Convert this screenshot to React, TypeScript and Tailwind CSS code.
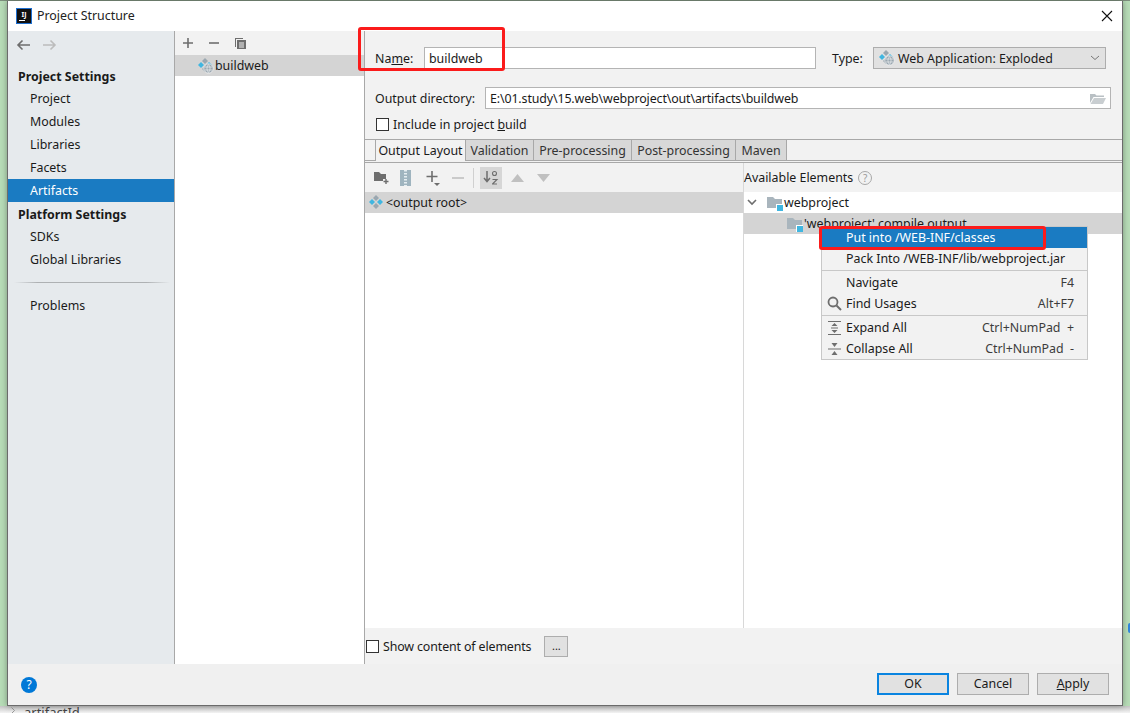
import { ReactNode } from "react";

const navItems = ["Project", "Modules", "Libraries", "Facets", "Artifacts"];
const tabs = [
  { label: "Validation", width: "w-[68px]" },
  { label: "Pre-processing", width: "w-[98px]" },
  { label: "Post-processing", width: "w-[104px]" },
  { label: "Maven", width: "w-[51px]" },
];

function ArtifactIcon({ globe = false }: { globe?: boolean }) {
  return (
    <svg width="17" height="16" viewBox="0 0 17 16" className="shrink-0">
      <path d="M1 7l3-3 3 3-3 3z" fill="#40b6e0" />
      <path d="M5 3l3-3 3 3-3 3z" fill="#9aa7b0" />
      <path d="M9 7l3-3 3 3-3 3z" fill="#40b6e0" />
      <path d="M5 11l3-3 3 3-3 3z" fill="#9aa7b0" />
      {globe && (
        <g>
          <circle cx="11.5" cy="10.5" r="4.7" fill="#9aa7b0" stroke="#f2f2f2" strokeWidth="0.8" />
          <path d="M8 9h7M8 12h7M11.5 6.5c-2 2.6-2 5.4 0 8M11.5 6.5c2 2.6 2 5.4 0 8" stroke="#eef1f2" strokeWidth="0.7" fill="none" />
        </g>
      )}
    </svg>
  );
}

function FolderIcon() {
  return (
    <svg width="16" height="16" viewBox="0 0 16 16" className="shrink-0">
      <path d="M0 2h6l2 2h7v9H0z" fill="#a9b5bd" />
      <rect x="9" y="9" width="7" height="7" fill="#fff" />
      <rect x="10" y="10" width="6" height="6" fill="#40b6e0" />
    </svg>
  );
}

function MenuRow({ label, shortcut, active, icon }: { label: string; shortcut?: string; active?: boolean; icon?: ReactNode }) {
  return (
    <div className={`flex h-[21px] items-center pr-[13px] ${active ? "bg-[#1a7bc2] text-white" : ""}`}>
      <div className="flex w-[24px] shrink-0 justify-center">{icon}</div>
      <span className="flex-1 whitespace-nowrap">{label}</span>
      {shortcut && <span className="whitespace-pre text-[#3c3c3c]">{shortcut}</span>}
    </div>
  );
}

function Button({ label, primary }: { label: ReactNode; primary?: boolean }) {
  return (
    <div className={`flex h-[22px] w-[72px] items-center justify-center bg-[#e1e1e1] ${primary ? "border-2 border-[#0a84e0]" : "border border-[#adadad]"}`}>
      {label}
    </div>
  );
}

function CheckBox() {
  return <div className="h-[13px] w-[13px] shrink-0 border border-[#333] bg-white" />;
}

export default function App() {
  return (
    <div className="relative h-[713px] w-[1130px] overflow-hidden bg-[#b7dcb7] text-[12.4px] leading-[16px] text-[#1a1a1a] [font-family:'Noto_Sans',sans-serif]">
      <div className="h-px bg-[#7d8f7d]" />
      <div className="relative z-10 ml-[7px] flex h-[705px] w-[1116px] flex-col border-x border-b border-[#6b6b6b] bg-[#f0f0f0] shadow-[0_0_6px_rgba(0,0,0,0.35)]">
        {/* title bar */}
        <div className="flex h-[30px] shrink-0 items-center bg-white pl-[8px] pr-[9px]">
          <div className="relative flex h-[16px] w-[16px] items-start justify-center border border-[#1e6fd0] bg-[#111] pt-[2px] text-[7px] leading-none font-bold text-white">
            IJ
            <div className="absolute bottom-[2px] left-[2px] h-px w-[6px] bg-white" />
          </div>
          <span className="ml-[5px] flex-1 text-[#222]">Project Structure</span>
          <svg width="12" height="12" viewBox="0 0 12 12">
            <path d="M1 1l10 10M11 1L1 11" stroke="#111" strokeWidth="1.1" fill="none" />
          </svg>
        </div>

        <div className="flex min-h-0 flex-1">
          {/* sidebar */}
          <div className="flex w-[166px] shrink-0 flex-col bg-[#e6eaed]">
            <div className="flex h-[27px] items-center gap-[13px] pl-[8px]">
              <svg width="14" height="12" viewBox="0 0 14 12">
                <path d="M14 6H2M6.5 1.5L2 6l4.5 4.5" stroke="#6e6e6e" strokeWidth="1.6" fill="none" />
              </svg>
              <svg width="14" height="12" viewBox="0 0 14 12">
                <path d="M0 6h12M7.5 1.5L12 6l-4.5 4.5" stroke="#bcbcbc" strokeWidth="1.6" fill="none" />
              </svg>
            </div>
            <div className="flex h-[29px] items-end pb-[2px] pl-[10px] font-bold">Project Settings</div>
            {navItems.map((item) => (
              <div
                key={item}
                className={`flex h-[23px] items-center pl-[22px] ${item === "Artifacts" ? "bg-[#1a7bc2] text-white" : ""}`}
              >
                {item}
              </div>
            ))}
            <div className="flex h-[24px] items-center pl-[10px] pt-[2px] font-bold">Platform Settings</div>
            <div className="flex h-[22px] items-center pl-[22px]">SDKs</div>
            <div className="flex h-[23px] items-center pl-[22px]">Global Libraries</div>
            <div className="ml-[6px] mt-[11px] h-px w-[156px] bg-[linear-gradient(90deg,transparent,#aeb1b3_15%,#aeb1b3_85%,transparent)]" />
            <div className="mt-[11px] flex h-[23px] items-center pl-[22px]">Problems</div>
          </div>

          {/* artifact list */}
          <div className="flex w-[191px] shrink-0 flex-col border-x border-[#a8a8a8] bg-white">
            <div className="flex h-[24px] items-center gap-[14px] bg-[#f2f2f2] pl-[7px]">
              <svg width="12" height="12" viewBox="0 0 12 12">
                <path d="M6 1v10M1 6h10" stroke="#6e6e6e" strokeWidth="1.6" />
              </svg>
              <svg width="12" height="12" viewBox="0 0 12 12">
                <path d="M1 6h10" stroke="#6e6e6e" strokeWidth="1.6" />
              </svg>
              <svg width="13" height="13" viewBox="0 0 13 13">
                <path d="M1 1h8v1H2v8H1z" fill="#6e6e6e" />
                <path d="M3 3h9v9H3z" fill="#6e6e6e" />
                <path d="M5 6h5M5 8h5M5 10h5" stroke="#f2f2f2" />
              </svg>
            </div>
            <div className="flex h-[21px] items-center gap-[1px] bg-[#d4d4d4] pl-[22px]">
              <ArtifactIcon globe />
              <span>buildweb</span>
            </div>
          </div>

          {/* artifact editor */}
          <div className="flex min-w-0 flex-1 flex-col">
            <div className="flex h-[108px] shrink-0 flex-col bg-[#f2f2f2] pl-[10px] pr-[11px]">
              <div className="mt-[16px] flex h-[22px] items-center">
                <span className="w-[49px] pt-px">
                  Na<span className="underline">m</span>e:
                </span>
                <div className="flex h-[22px] w-[392px] items-center border border-[#b4b4b4] bg-white pl-[4px] pt-px">buildweb</div>
                <span className="ml-[16px] w-[41px] pt-px">Type:</span>
                <div className="flex h-[22px] w-[233px] items-center border border-[#adadad] bg-[#e1e1e1] pl-[4px] pr-[5px]">
                  <ArtifactIcon globe />
                  <span className="ml-[3px] flex-1 pt-px">Web Application: Exploded</span>
                  <svg width="10" height="6" viewBox="0 0 10 6">
                    <path d="M1 1l4 3.5L9 1" stroke="#777" fill="none" />
                  </svg>
                </div>
              </div>
              <div className="mt-[18px] flex h-[22px] items-center">
                <span className="w-[110px] pt-px">Output directory:</span>
                <div className="flex h-[22px] flex-1 items-center justify-between border border-[#b4b4b4] bg-white pl-[4px] pr-[4px]">
                  <span className="pt-px tracking-[-0.01em]">E:\01.study\15.web\webproject\out\artifacts\buildweb</span>
                  <svg width="16" height="13" viewBox="0 0 16 13">
                    <path d="M0 2h5l1.5 1.5H14V5H3.5L0 11z" fill="#b9c0c4" />
                    <path d="M4 6h12l-3 6H0.5z" fill="#c9ced1" />
                  </svg>
                </div>
              </div>
              <div className="mt-[9px] flex h-[13px] items-center gap-[4px] pl-px">
                <CheckBox />
                <span>
                  Include in project <span className="underline">b</span>uild
                </span>
              </div>
            </div>

            {/* tabs */}
            <div className="flex h-[21px] shrink-0 items-stretch border-t border-[#a8a8a8] bg-[#f2f2f2] pl-[10px]">
              <div className="z-10 flex h-[21px] w-[91px] items-center justify-center border-x border-[#a8a8a8] bg-[#f2f2f2] pt-px">Output Layout</div>
              {tabs.map((tab) => (
                <div key={tab.label} className={`flex h-[20px] items-center justify-center border-r border-[#a8a8a8] bg-[#d8d8d8] pt-px text-[#333] ${tab.width}`}>
                  {tab.label}
                </div>
              ))}
            </div>
            <div className="h-[3px] shrink-0 border-y border-[#a8a8a8] bg-[#f2f2f2]" />

            {/* output layout */}
            <div className="flex min-h-0 flex-1">
              <div className="flex w-[378px] shrink-0 flex-col bg-white">
                <div className="flex h-[29px] shrink-0 items-center bg-[#f2f2f2] pl-[9px]">
                  <svg width="15" height="13" viewBox="0 0 15 13" className="shrink-0">
                    <path d="M0 1h5l2 2h5v5H9v2H0z" fill="#6e6e6e" />
                    <path d="M12 8v5M9.5 10.5h5" stroke="#6e6e6e" strokeWidth="1.4" />
                  </svg>
                  <svg width="11" height="16" viewBox="0 0 11 16" className="ml-[11px] shrink-0">
                    <rect x="0" y="0" width="11" height="16" fill="#9fb4bf" />
                    <path d="M5.5 0v16" stroke="#e5edf1" strokeWidth="3" strokeDasharray="1.5 1.5" />
                  </svg>
                  <svg width="15" height="17" viewBox="0 0 15 17" className="ml-[15px] shrink-0">
                    <path d="M6 2v11M0.5 7.5h11" stroke="#6e6e6e" strokeWidth="1.6" />
                    <path d="M8 14h6l-3 3z" fill="#6e6e6e" />
                  </svg>
                  <svg width="12" height="12" viewBox="0 0 12 12" className="ml-[11px] shrink-0">
                    <path d="M0 6h12" stroke="#c0c0c0" strokeWidth="1.6" />
                  </svg>
                  <div className="ml-[9px] h-[20px] w-px shrink-0 bg-[#d0d0d0]" />
                  <div className="ml-[6px] flex h-[22px] w-[22px] shrink-0 items-center justify-center bg-[#d6d6d6]">
                    <svg width="16" height="15" viewBox="0 0 16 15">
                      <path d="M4 1v10M1 8l3 3.5L7 8" stroke="#6e6e6e" strokeWidth="1.5" fill="none" />
                      <path d="M9 14h5M9.5 9.5H14L9.5 14" stroke="#6e6e6e" strokeWidth="1.1" fill="none" />
                      <circle cx="11.5" cy="3.5" r="2" stroke="#6e6e6e" strokeWidth="1.1" fill="none" />
                    </svg>
                  </div>
                  <svg width="13" height="8" viewBox="0 0 13 8" className="ml-[9px] shrink-0">
                    <path d="M0 8l6.5-8L13 8z" fill="#c0c0c0" />
                  </svg>
                  <svg width="13" height="8" viewBox="0 0 13 8" className="ml-[13px] shrink-0">
                    <path d="M0 0l6.5 8L13 0z" fill="#c0c0c0" />
                  </svg>
                </div>
                <div className="flex h-[21px] shrink-0 items-center gap-[1px] bg-[#d4d4d4] pl-[3px]">
                  <ArtifactIcon />
                  <span>&lt;output root&gt;</span>
                </div>
              </div>

              <div className="flex min-w-0 flex-1 flex-col border-l border-[#d8d8d8] bg-white">
                <div className="flex h-[29px] shrink-0 items-center gap-[5px] bg-[#f2f2f2]">
                  <span>Available Elements</span>
                  <div className="flex h-[14px] w-[14px] items-center justify-center rounded-full border border-[#a8a8a8] text-[10px] text-[#9a9a9a]">?</div>
                </div>
                <div className="flex h-[21px] shrink-0 items-center pl-[3px]">
                  <svg width="10" height="7" viewBox="0 0 10 7">
                    <path d="M1 1l4 4 4-4" stroke="#6e6e6e" strokeWidth="1.6" fill="none" />
                  </svg>
                  <span className="ml-[10px]">
                    <FolderIcon />
                  </span>
                  <span className="ml-px">webproject</span>
                </div>
                <div className="flex h-[21px] shrink-0 items-center bg-[#d4d4d4] pl-[43px]">
                  <FolderIcon />
                  <span className="ml-px">'webproject' compile output</span>
                </div>
              </div>
            </div>

            <div className="flex h-[36px] shrink-0 items-center bg-[#f2f2f2] pl-px">
              <CheckBox />
              <span className="ml-[4px] pt-[2px] tracking-[-0.01em]">Show content of elements</span>
              <div className="ml-[13px] flex h-[21px] w-[24px] items-center justify-center border border-[#adadad] bg-[#e1e1e1] text-[11px]">...</div>
            </div>
          </div>
        </div>

        {/* footer */}
        <div className="flex h-[41px] shrink-0 items-center border-t border-[#f0f0f0] bg-[#f0f0f0] pl-[13px] pr-[13px]">
          <div className="flex h-[16px] w-[16px] items-center justify-center rounded-full bg-[#0078d7] text-[12px] text-white">?</div>
          <div className="ml-auto flex gap-[8px] pb-[2px]">
            <Button label="OK" primary />
            <Button label="Cancel" />
            <Button
              label={
                <span>
                  <span className="underline">A</span>pply
                </span>
              }
            />
          </div>
        </div>
      </div>

      {/* what lies behind the dialog */}
      <div className="flex h-[7px] items-start gap-[9px] bg-[linear-gradient(#c4c4c4,#f4f4f4)] pl-[11px] text-[#444]">
        <svg width="4" height="7" viewBox="0 0 4 7" className="mt-[1px] shrink-0">
          <path d="M0.5 0.5L3.5 3.5L0.5 6.5" stroke="#999" fill="none" />
        </svg>
        <span className="-mt-[2px] text-[13px]">artifactId</span>
      </div>
      <div className="absolute left-[1128px] top-[623px] h-[10px] w-[2px] rounded-l-[2px] bg-[#2f86dd]" />

      {/* popup menu */}
      <div className="absolute left-[821px] top-[226px] z-20 w-[267px] border border-[#c8c8c8] bg-[#f2f2f2] text-[#1a1a1a]">
        <MenuRow label="Put into /WEB-INF/classes" active />
        <MenuRow label="Pack Into /WEB-INF/lib/webproject.jar" />
        <div className="my-px h-px bg-[#c8c8c8]" />
        <MenuRow label="Navigate" shortcut="F4" />
        <MenuRow
          label="Find Usages"
          shortcut="Alt+F7"
          icon={
            <svg width="15" height="15" viewBox="0 0 15 15">
              <circle cx="6" cy="6" r="4.5" stroke="#6e6e6e" strokeWidth="1.8" fill="none" />
              <path d="M9.5 9.5L14 14" stroke="#6e6e6e" strokeWidth="2" />
            </svg>
          }
        />
        <div className="my-px h-px bg-[#c8c8c8]" />
        <MenuRow
          label="Expand All"
          shortcut="Ctrl+NumPad  +"
          icon={
            <svg width="13" height="14" viewBox="0 0 13 14">
              <path d="M0 .5h13M0 13.5h13M3 7h7" stroke="#6e6e6e" />
              <path d="M3.5 5l3-3 3 3zM3.5 9l3 3 3-3z" fill="#6e6e6e" />
            </svg>
          }
        />
        <MenuRow
          label="Collapse All"
          shortcut="Ctrl+NumPad  -"
          icon={
            <svg width="13" height="14" viewBox="0 0 13 14">
              <path d="M0 7h13" stroke="#6e6e6e" />
              <path d="M3.5 1l3 4 3-4zM3.5 13l3-4 3 4z" fill="#6e6e6e" />
            </svg>
          }
        />
      </div>

      {/* red annotations */}
      <div className="absolute left-[358px] top-[27px] z-20 h-[44px] w-[147px] rounded-[3px] border-[3px] border-[#fb1b1b]" />
      <div className="absolute left-[819px] top-[226px] z-20 h-[24px] w-[227px] rounded-[3px] border-[3px] border-[#fb1b1b]" />
    </div>
  );
}
